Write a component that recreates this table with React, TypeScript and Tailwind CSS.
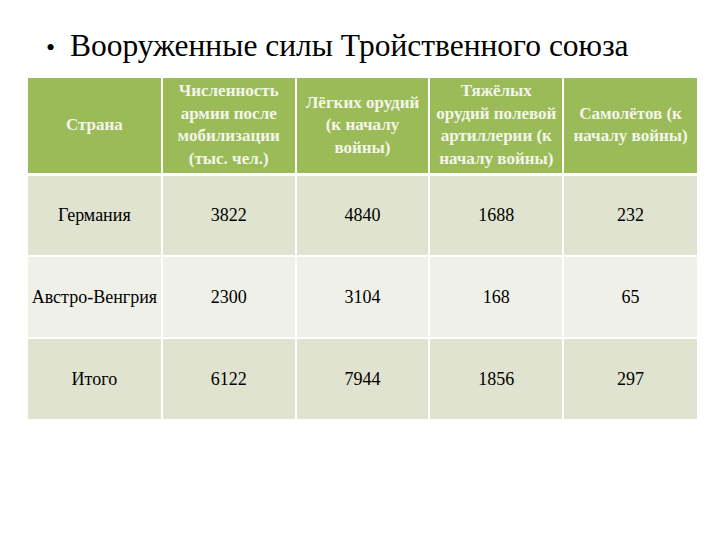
const headers = [
  'Страна',
  'Численность армии после мобилизации (тыс. чел.)',
  'Лёгких орудий (к началу войны)',
  'Тяжёлых орудий полевой артиллерии (к началу войны)',
  'Самолётов (к началу войны)',
];

const rows = [
  ['Германия', '3822', '4840', '1688', '232'],
  ['Австро-Венгрия', '2300', '3104', '168', '65'],
  ['Итого', '6122', '7944', '1856', '297'],
];

export default function App() {
  return (
    <div className="w-[720px] h-[540px] bg-white overflow-hidden font-['Liberation_Serif','Times_New_Roman',serif]">
      {/* Title */}
      <div className="flex items-baseline pl-[46px] pt-[26px] h-[78px] text-[31.5px] leading-[40px] text-black">
        <span className="w-[24px] text-[26px]">•</span>
        <span>Вооруженные силы Тройственного союза</span>
      </div>

      {/* Table */}
      <table className="ml-[28px] w-[669px] border-collapse table-fixed">
        <thead>
          <tr className="h-[96px] bg-[#9bbb59]">
            {headers.map((h, i) => (
              <th
                key={i}
                className="border-2 border-white border-b-[3px] border-t-0 first:border-l-0 last:border-r-0 px-[5px] text-[17px] leading-[22.5px] font-bold text-[#f3f6e9] text-center align-middle"
              >
                {h}
              </th>
            ))}
          </tr>
        </thead>
        <tbody>
          {rows.map((r, ri) => (
            <tr key={ri} className={ri === 1 ? 'h-[82px] bg-[#eff1e8]' : 'h-[82px] bg-[#dfe3d0]'}>
              {r.map((c, ci) => (
                <td
                  key={ci}
                  className="border-2 border-white first:border-l-0 last:border-r-0 text-[18px] text-black text-center align-middle"
                >
                  {c}
                </td>
              ))}
            </tr>
          ))}
        </tbody>
      </table>
    </div>
  );
}
